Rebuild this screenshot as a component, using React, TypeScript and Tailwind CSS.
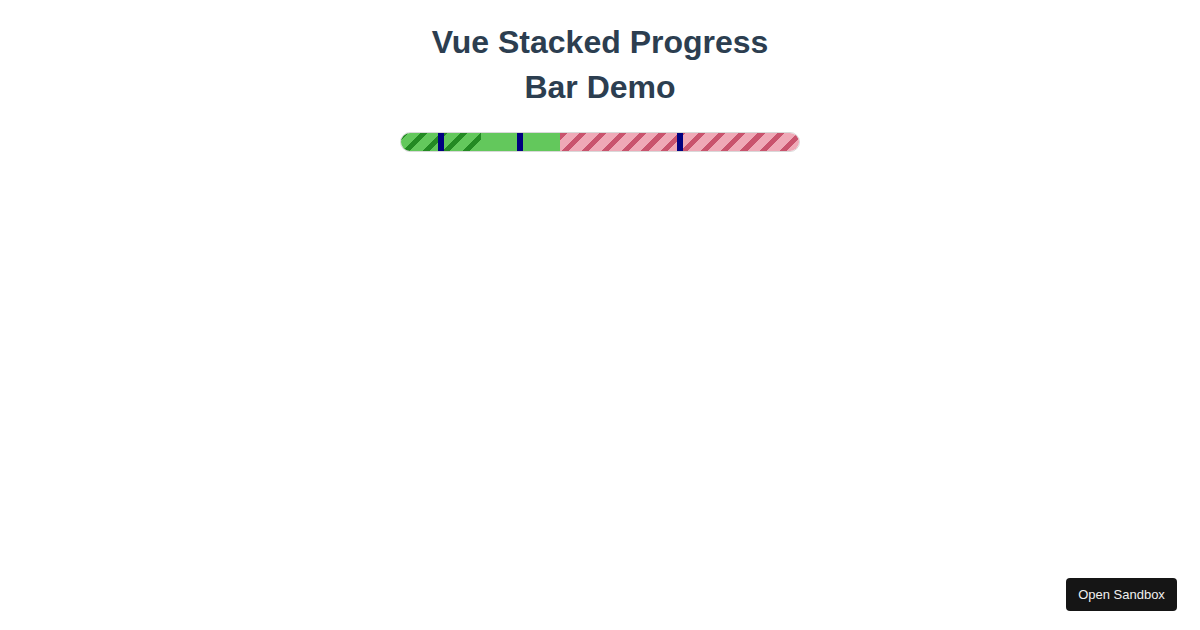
export default function App() {
  return (
    <div className="relative h-[630px] w-[1200px] bg-white font-['Liberation_Sans',Arial,sans-serif]">
      <div className="mx-auto flex w-[400px] flex-col items-center pt-[20px]">
        {/* TITLE */}
        <h1 className="w-[380px] text-center text-[32px] font-bold leading-[45px] text-[#2c3e50]">
          Vue Stacked Progress Bar Demo
        </h1>

        {/* STACKED PROGRESS BAR */}
        <div className="relative mt-[22px] flex h-5 w-[400px] overflow-hidden rounded-[10px] border border-[#d9d9d9]">
          <div className="h-full w-[20%] bg-[repeating-linear-gradient(135deg,#238a23_0_5px,#63c85c_5px_14px)]" />
          <div className="h-full w-[20%] bg-[#63c85c]" />
          <div className="h-full w-[60%] bg-[repeating-linear-gradient(135deg,#c9536d_0_5px,#efa9b7_5px_14px)]" />

          {/* MARKERS */}
          <div className="absolute top-0 left-[37px] h-full w-[6px] bg-[#000080]" />
          <div className="absolute top-0 left-[116px] h-full w-[6px] bg-[#000080]" />
          <div className="absolute top-0 left-[276px] h-full w-[6px] bg-[#000080]" />
        </div>
      </div>

      {/* SANDBOX BUTTON */}
      <button className="absolute right-[23px] bottom-[19px] flex h-[33px] w-[111px] items-center justify-center rounded-[4px] bg-[#151515] text-[13px] text-[#f0f0f0]">
        Open Sandbox
      </button>
    </div>
  );
}
